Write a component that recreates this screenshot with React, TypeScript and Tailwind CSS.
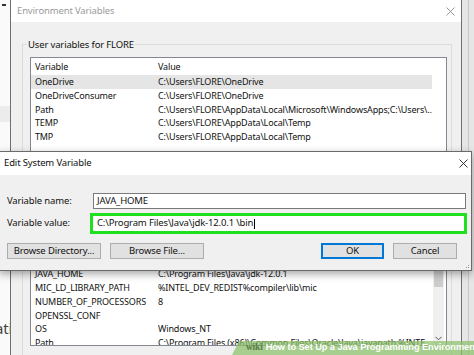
import React from 'react';

const USER_VARS = [
  { name: 'OneDrive', value: 'C:\\Users\\FLORE\\OneDrive', selected: true },
  { name: 'OneDriveConsumer', value: 'C:\\Users\\FLORE\\OneDrive' },
  { name: 'Path', value: 'C:\\Users\\FLORE\\AppData\\Local\\Microsoft\\WindowsApps;C:\\Users\\...' },
  { name: 'TEMP', value: 'C:\\Users\\FLORE\\AppData\\Local\\Temp' },
  { name: 'TMP', value: 'C:\\Users\\FLORE\\AppData\\Local\\Temp' },
];

const SYSTEM_VARS = [
  { name: 'ComSpec', value: 'C:\\WINDOWS\\system32\\cmd.exe' },
  { name: 'DriverData', value: 'C:\\Windows\\System32\\Drivers\\DriverData' },
  { name: 'JAVA_HOME', value: 'C:\\Program Files\\Java\\jdk-12.0.1' },
  { name: 'MIC_LD_LIBRARY_PATH', value: '%INTEL_DEV_REDIST%compiler\\lib\\mic' },
  { name: 'NUMBER_OF_PROCESSORS', value: '8' },
  { name: 'OPENSSL_CONF', value: '' },
  { name: 'OS', value: 'Windows_NT' },
  { name: 'Path', value: 'C:\\Program Files (x86)\\Common Files\\Oracle\\Java\\javapath;%INTE...' },
  { name: 'PATHEXT', value: '.COM;.EXE;.BAT;.CMD' },
];

function CloseX({ className = '' }: { className?: string }) {
  return (
    <svg className={className} width="9" height="9" viewBox="0 0 9 9" fill="none">
      <path d="M0.5 0.5L8.5 8.5M8.5 0.5L0.5 8.5" stroke="currentColor" strokeWidth="0.9" />
    </svg>
  );
}

function Row({ name, value, selected }: { name: string; value: string; selected?: boolean }) {
  return (
    <div className={`flex h-[13.75px] items-center ${selected ? 'bg-[#e5e5e5]' : ''}`}>
      <div className="w-[127px] shrink-0 pl-[4px] whitespace-nowrap">{name}</div>
      <div className="flex-1 whitespace-nowrap overflow-hidden">{value}</div>
    </div>
  );
}

function WinButton({ label, width, primary }: { label: string; width: string; primary?: boolean }) {
  return (
    <div
      className={`${width} h-[16px] flex items-center justify-center bg-[#e1e1e1] border text-[9.5px] ${
        primary ? 'border-[#0078d7] shadow-[inset_0_0_0_1px_#0078d7]' : 'border-[#adadad]'
      }`}
    >
      {label}
    </div>
  );
}

export default function App() {
  return (
    <div
      className="relative w-[474px] h-[355px] overflow-hidden bg-[#e6e6e6] text-[9px] text-[#111] tracking-[-0.15px]"
      style={{ fontFamily: '"Noto Sans", "Open Sans", sans-serif' }}
    >
      {/* desktop window behind, left edge */}
      <div className="absolute left-0 top-0 w-[11px] h-full bg-[#fafafa] overflow-hidden">
        <div className="mt-[4px] ml-[2px] w-[4px] h-[2px] bg-[#333]" />
        <div className="mt-[100px] h-[16px] bg-[#ececec]" />
        <div className="mt-[30px] ml-[1px] w-[6px] h-[4px] border-t-2 border-r-2 border-[#333]" />
        <div className="mt-[165px] -ml-[5px] text-[15px] text-[#444] leading-none">ati</div>
      </div>
      {/* right edge */}
      <div className="absolute right-[5px] top-0 w-px h-full bg-[#c8c8c8]" />

      {/* Environment Variables window */}
      <div className="absolute left-[10px] top-0 w-[452px] h-[355px] border-l border-r border-[#707070] bg-[#f0f0f0] flex flex-col">
        <div className="h-[22px] shrink-0 bg-white flex items-center justify-between pl-[6px] pr-[6px] text-[#9a9a9a] text-[9.5px]">
          <span>Environment Variables</span>
          <CloseX className="text-[#8a8a8a]" />
        </div>

        <div className="pl-[11px] pr-[9px]">
          {/* User variables */}
          <div className="relative mt-[22px] h-[140px] border border-[#dcdcdc] pl-[7px] pr-[4px] pt-[12px]">
            <span className="absolute -top-[7px] left-[4px] bg-[#f0f0f0] px-px text-[9.5px]">User variables for FLORE</span>
            <div className="h-[110px] border border-[#828790] bg-white flex flex-col">
              <div className="flex h-[17px] items-center bg-white mr-[14px]">
                <div className="w-[127px] pl-[4px]">Variable</div>
                <div>Value</div>
              </div>
              <div className="mr-[14px]">
                {USER_VARS.map(v => (
                  <Row key={v.name} {...v} />
                ))}
              </div>
            </div>
          </div>

          {/* System variables */}
          <div className="relative mt-[17px] h-[170px] border border-[#dcdcdc] pl-[7px] pr-[4px] pt-[19.75px]">
            <span className="absolute -top-[7px] left-[4px] bg-[#f0f0f0] px-px text-[9.5px]">System variables</span>
            <div className="h-[124.25px] border border-[#828790] bg-white flex overflow-hidden">
              <div className="flex-1 overflow-hidden">
                <div className="flex h-[17px] items-center">
                  <div className="w-[127px] pl-[4px]">Variable</div>
                  <div>Value</div>
                </div>
                {SYSTEM_VARS.map(v => (
                  <Row key={v.name} {...v} />
                ))}
              </div>
              <div className="w-[11px] shrink-0 bg-[#f0f0f0] flex flex-col items-center mr-[2px]">
                <div className="mt-[44px] w-[9px] h-[20px] bg-[#cdcdcd]" />
                <div className="flex-1" />
                <svg className="mb-[4px]" width="7" height="5" viewBox="0 0 7 5">
                  <path d="M0.5 0.8L3.5 3.8L6.5 0.8" stroke="#555" strokeWidth="1" fill="none" />
                </svg>
              </div>
            </div>
          </div>
        </div>
      </div>

      {/* Edit System Variable dialog */}
      <div className="absolute -left-px top-[151px] w-[473px] h-[120px] border border-[#6a6a6a] bg-[#f0f0f0] shadow-[0_3px_8px_rgba(0,0,0,0.35)] flex flex-col">
        <div className="h-[23px] shrink-0 bg-white flex items-center justify-between pl-[4px] pr-[3px] text-[9.5px]">
          <span>Edit System Variable</span>
          <CloseX className="text-[#222]" />
        </div>
        <div className="relative flex-1 pl-[7px] pr-[4px] pt-[18px] text-[9.5px]">
          <div className="flex items-center h-[16px]">
            <div className="w-[83px] shrink-0">Variable name:</div>
            <div className="ml-[3px] mr-[1px] flex-1 h-[16px] border border-[#7a7a7a] bg-white flex items-center pl-[3px]">
              JAVA_HOME
            </div>
          </div>
          <div className="flex items-center h-[21px] mt-[4px]">
            <div className="w-[83px] shrink-0">Variable value:</div>
            <div className="flex-1 h-[21px] border-[3px] border-[#1fe01f] bg-white flex items-center pl-[4px]">
              <span>C:\Program Files\Java\jdk-12.0.1 \bin</span>
              <span className="ml-px w-px h-[10px] bg-black" />
            </div>
          </div>
          <div className="flex items-center mt-[9px] gap-[9px]">
            <WinButton label="Browse Directory..." width="w-[94px]" />
            <WinButton label="Browse File..." width="w-[94px]" />
            <div className="flex-1" />
            <WinButton label="OK" width="w-[63px]" primary />
            <WinButton label="Cancel" width="w-[64px]" />
            <div className="w-px" />
          </div>
          {/* resize grip */}
          <div className="absolute right-[2px] bottom-[2px] grid grid-cols-3 gap-px">
            <span />
            <span />
            <span className="w-px h-px bg-[#999]" />
            <span />
            <span className="w-px h-px bg-[#999]" />
            <span className="w-px h-px bg-[#999]" />
          </div>
        </div>
      </div>

      {/* wikiHow watermark */}
      <div
        className="absolute left-[232px] bottom-0 w-[242px] h-[14px] bg-[rgba(140,192,105,0.72)] [clip-path:polygon(7px_0,100%_0,100%_100%,0_100%)] flex items-center pl-[14px] whitespace-nowrap text-white font-bold text-[9.3px] tracking-[-0.1px]"
        style={{ fontFamily: '"Liberation Sans", Arial, sans-serif' }}
      >
        <span className="text-[#5b7a4a] mr-[3px]" style={{ fontFamily: '"Liberation Serif", serif' }}>wiki</span>
        <span>How to Set Up a Java Programming Environment</span>
      </div>
    </div>
  );
}
